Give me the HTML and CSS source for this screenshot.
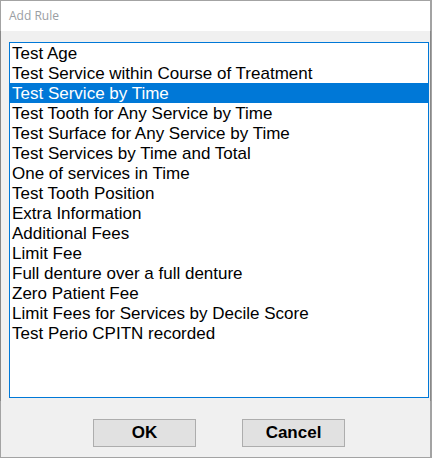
FILE: index.html
```html
<!DOCTYPE html>
<html>
<head>
<meta charset="utf-8">
<title>Add Rule</title>
<link rel="stylesheet" href="styles.css">
</head>
<body>
<div class="window">
  <div class="titlebar">Add Rule</div>
  <div class="client">
    <div class="panel">
      <ul class="listbox">
        <li class="item">Test Age</li>
        <li class="item">Test Service within Course of Treatment</li>
        <li class="item selected">Test Service by Time</li>
        <li class="item">Test Tooth for Any Service by Time</li>
        <li class="item">Test Surface for Any Service by Time</li>
        <li class="item">Test Services by Time and Total</li>
        <li class="item">One of services in Time</li>
        <li class="item">Test Tooth Position</li>
        <li class="item">Extra Information</li>
        <li class="item">Additional Fees</li>
        <li class="item">Limit Fee</li>
        <li class="item">Full denture over a full denture</li>
        <li class="item">Zero Patient Fee</li>
        <li class="item">Limit Fees for Services by Decile Score</li>
        <li class="item">Test Perio CPITN recorded</li>
      </ul>
    </div>
    <div class="buttons">
      <button class="btn">OK</button>
      <button class="btn">Cancel</button>
    </div>
  </div>
</div>
</body>
</html>
```

FILE: styles.css
```css
html, body {
  margin: 0;
  padding: 0;
  background: #ffffff;
}

.window {
  width: 432px;
  height: 458px;
  box-sizing: border-box;
  border: 1px solid #a3a3a3;
  border-right: 2px solid #a3a3a3;
  display: flex;
  flex-direction: column;
  background: #f0f0f0;
}

.titlebar {
  height: 30px;
  flex: 0 0 30px;
  background: #ffffff;
  color: #9a9ea3;
  font-family: "Open Sans", "Noto Sans", sans-serif;
  font-size: 12px;
  line-height: 30px;
  padding-left: 8px;
  box-sizing: border-box;
}

.client {
  flex: 1;
  display: flex;
  flex-direction: column;
  background: #f0f0f0;
}

.panel {
  margin-left: -1px;
  margin-right: -1px;
  border-left: 1px solid #888888;
  border-right: 1px solid #888888;
  padding: 11px 0 3px 0;
}

.listbox {
  list-style: none;
  margin: 0 1px 0 8px;
  padding: 0;
  width: 420px;
  height: 356px;
  box-sizing: border-box;
  border: 1px solid #0078d7;
  background: #ffffff;
  font-family: "Liberation Sans", Arial, sans-serif;
  font-size: 17px;
  color: #000000;
}

.item {
  height: 20px;
  line-height: 21px;
  padding-left: 2px;
  white-space: nowrap;
}

.item.selected {
  background: #0078d7;
  color: #ffffff;
}

.buttons {
  display: flex;
  gap: 46px;
  padding-left: 92px;
  margin-top: 18px;
}

.btn {
  width: 103px;
  height: 28px;
  box-sizing: border-box;
  border: 1px solid #adadad;
  background: #e1e1e1;
  font-family: "Liberation Sans", Arial, sans-serif;
  font-weight: bold;
  font-size: 17px;
  color: #000000;
  padding: 0;
  margin: 0;
}
```
